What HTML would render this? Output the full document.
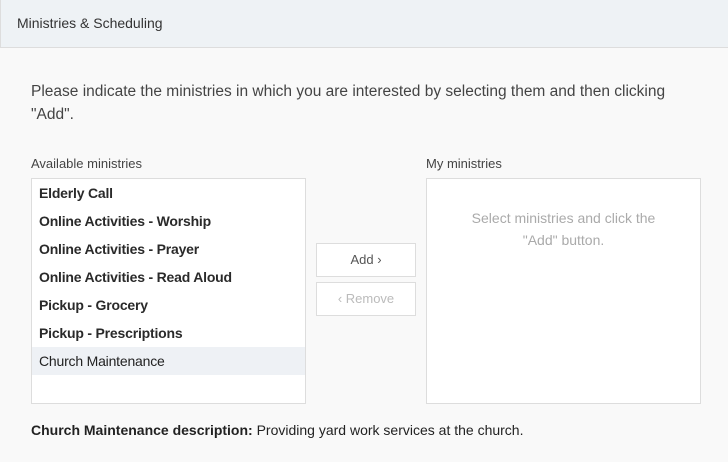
<html><head><style>
body{margin:0;width:728px;height:462px;background:#f9f9f9;font-family:"Liberation Sans",sans-serif;position:relative;overflow:hidden;color:#333}
.hd{position:absolute;left:0;top:0;width:728px;height:48px;background:#eef2f5;border-bottom:1px solid #ddd;border-left:1px solid #ddd;box-sizing:border-box}
.hd span{position:absolute;left:16px;top:15px;font-size:14px;color:#333}
.a{position:absolute}
.box{position:absolute;top:178px;height:226px;width:275px;background:#fff;border:1px solid #ddd;box-sizing:border-box}
.it{height:28px;line-height:28px;padding-left:7px;font-size:14px;font-weight:bold;color:#2a2a2a;letter-spacing:-0.2px}
.btn{position:absolute;left:316px;width:100px;height:34px;background:#fff;border:1px solid #ddd;box-sizing:border-box;text-align:center;line-height:32px;font-size:13px}
</style></head><body>
<div class="hd"><span>Ministries &amp; Scheduling</span></div>
<div class="a" style="left:31px;top:80px;width:670px;font-size:15.5px;line-height:23px;color:#444">Please indicate the ministries in which you are interested by selecting them and then clicking "Add".</div>
<div class="a" style="left:31px;top:156px;font-size:13px;color:#444">Available ministries</div>
<div class="a" style="left:426px;top:156px;font-size:13px;color:#444">My ministries</div>
<div class="box" style="left:31px">
<div class="it">Elderly Call</div><div class="it">Online Activities - Worship</div><div class="it">Online Activities - Prayer</div><div class="it">Online Activities - Read Aloud</div><div class="it">Pickup - Grocery</div><div class="it">Pickup - Prescriptions</div><div class="it" style="background:#eef1f5;font-weight:normal;color:#222">Church Maintenance</div>
</div>
<div class="btn" style="top:243px;color:#555">Add ›</div>
<div class="btn" style="top:282px;color:#bbb">‹ Remove</div>
<div class="box" style="left:426px;text-align:center;color:#aaa;font-size:14px;line-height:22px;padding:28px 34px 0">Select ministries and click the "Add" button.</div>
<div class="a" style="left:31px;top:422px;font-size:14px;color:#222"><b>Church Maintenance description:</b> Providing yard work services at the church.</div>
</body></html>
